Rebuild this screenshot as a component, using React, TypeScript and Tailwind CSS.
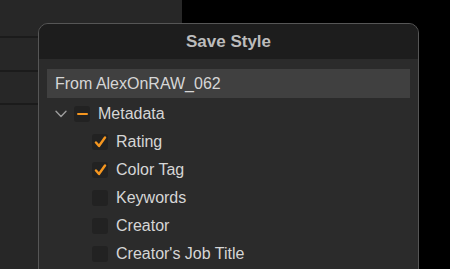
const items = [
  { label: "Rating", checked: true },
  { label: "Color Tag", checked: true },
  { label: "Keywords", checked: false },
  { label: "Creator", checked: false },
  { label: "Creator's Job Title", checked: false },
];

function Check({ checked }: { checked: boolean }) {
  return (
    <div className="w-[16px] h-[16px] rounded-[3px] bg-[#222222] flex items-center justify-center shrink-0">
      {checked && (
        <svg width="13" height="12" viewBox="0 0 13 12">
          <path
            d="M2 6.5 L5 10 L11 1.5"
            fill="none"
            stroke="#f5961f"
            strokeWidth="2.4"
            strokeLinecap="round"
            strokeLinejoin="round"
          />
        </svg>
      )}
    </div>
  );
}

export default function App() {
  return (
    <div
      className="relative w-[450px] h-[269px] overflow-hidden bg-black flex"
      style={{ fontFamily: '"Liberation Sans", Arial, sans-serif' }}
    >
      {/* Background panel */}
      <div className="w-[182px] h-full bg-[#272727] flex flex-col">
        <div className="h-[38px] border-b-2 border-[#1b1b1b]" />
        <div className="h-[34px] border-b-2 border-[#1b1b1b]" />
        <div className="h-[33px] border-b-2 border-[#1b1b1b]" />
      </div>

      {/* Save Style sheet */}
      <div className="absolute left-[38px] top-[23px] w-[381px] h-[260px] rounded-t-[10px] border border-[#565656] bg-[#2b2b2b] overflow-hidden">
        <div className="h-[35px] bg-[#1d1d1d] flex items-center justify-center">
          <span className="text-[17px] font-bold text-[#bcbcbc]">Save Style</span>
        </div>
        <div className="px-[8px] pt-[10px]">
          <div className="h-[29px] bg-[#404040] flex items-center pl-[8px] text-[16px] text-[#d6d6d6]">
            From AlexOnRAW_062
          </div>
        </div>
        <div className="mt-[2px] flex flex-col">
          <div className="h-[28px] flex items-center">
            <svg className="ml-[16px] shrink-0" width="12" height="8" viewBox="0 0 12 8">
              <path
                d="M1 1.2 L6 6.5 L11 1.2"
                fill="none"
                stroke="#9c9c9c"
                strokeWidth="1.4"
                strokeLinecap="round"
                strokeLinejoin="round"
              />
            </svg>
            <div className="ml-[7px] w-[16px] h-[16px] rounded-[3px] bg-[#222222] flex items-center justify-center">
              <div className="w-[11px] h-[2.5px] rounded-full bg-[#f5961f]" />
            </div>
            <span className="ml-[8px] text-[16px] text-[#d6d6d6]">Metadata</span>
          </div>
          {items.map((item) => (
            <div key={item.label} className="h-[28px] flex items-center pl-[53px]">
              <Check checked={item.checked} />
              <span className="ml-[8px] text-[16px] text-[#d6d6d6]">{item.label}</span>
            </div>
          ))}
        </div>
      </div>
    </div>
  );
}
